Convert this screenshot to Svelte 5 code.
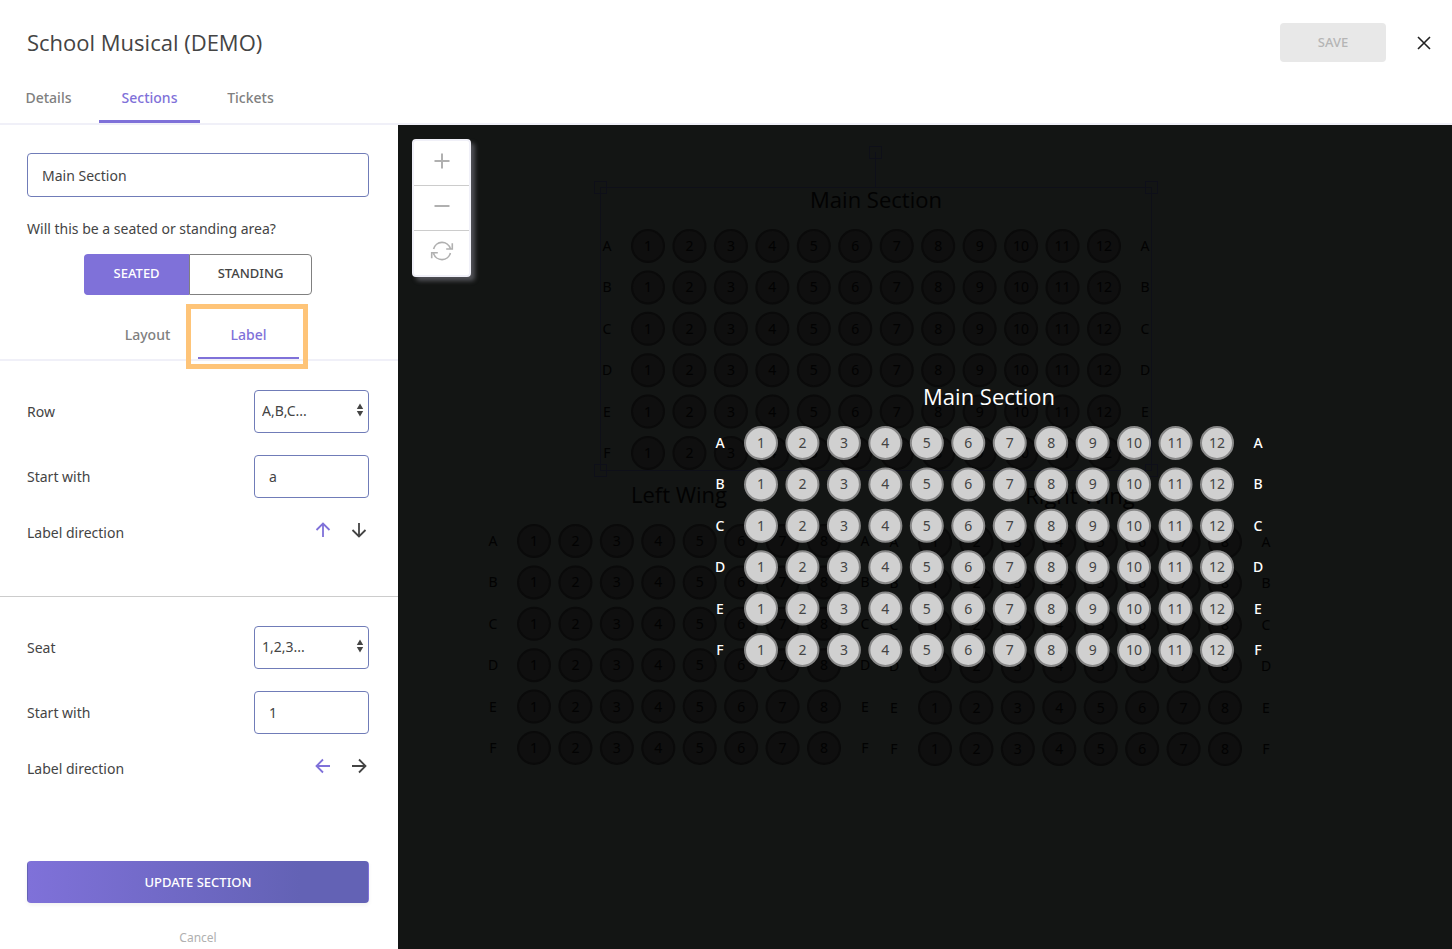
<script>
  const rowNames = ['A', 'B', 'C', 'D', 'E', 'F'];
  const rowSpan = 207;

  const ghosts = [
    { name: 'Main Section', x: 250, y: 121, seats: 12, span: 456 },
    { name: 'Left Wing', x: 136, y: 416, seats: 8, span: 290 },
    { name: 'Right Wing', x: 537, y: 417, seats: 8, span: 290 }
  ];
  const active = { name: 'Main Section', x: 363, y: 318, seats: 12, span: 456 };
  const handles = [[202, 62], [753, 62], [202, 345], [753, 345], [477, 27]];

  let tab = $state('Sections');
  let area = $state('Seated');
  let subTab = $state('Label');
  let sectionName = $state('Main Section');
  let rowStart = $state('a');
  let seatStart = $state('1');
  let rowDirection = $state('up');
  let seatDirection = $state('left');

  const arrows = {
    up: 'M10 17V3.5M3.5 10L10 3.5L16.5 10',
    down: 'M10 3V16.5M3.5 10L10 16.5L16.5 10',
    left: 'M17 10H3.5M10 3.5L3.5 10L10 16.5',
    right: 'M3 10H16.5M10 3.5L16.5 10L10 16.5'
  };
</script>

{#snippet block(section, kind)}
  <g class={kind} transform="translate({section.x} {section.y})">
    <text class="name" x={section.span / 2} y="-38">{section.name}</text>
    {#each rowNames as row, r}
      {@const y = (r * rowSpan) / (rowNames.length - 1)}
      <text class="row-name" x="-41" y={y + 5}>{row}</text>
      {#each Array(section.seats) as _, s}
        {@const x = (s * section.span) / (section.seats - 1)}
        <circle cx={x} cy={y} r="16" />
        <text class="seat" {x} y={y + 5}>{s + 1}</text>
      {/each}
      <text class="row-name" x={section.span + 41} y={y + 5}>{row}</text>
    {/each}
  </g>
{/snippet}

{#snippet direction(label, options, current, pick)}
  <div class="field direction" role="group" aria-label={label}>
    <span>{label}</span>
    <div class="arrows">
      {#each options as option}
        <button type="button" class:on={current === option} aria-label={option} onclick={() => pick(option)}>
          <svg width="20" height="20" viewBox="0 0 20 20"><path d={arrows[option]} /></svg>
        </button>
      {/each}
    </div>
  </div>
{/snippet}

{#snippet sorter()}
  <svg class="sorter" width="8" height="14" viewBox="0 0 8 14"><path d="M4 0.5L7.2 6H0.8ZM4 13.5L7.2 8H0.8Z" /></svg>
{/snippet}

<div class="page">
  <header>
    <div class="title-bar">
      <h1>School Musical (DEMO)</h1>
      <button type="button" class="save" disabled>SAVE</button>
      <button type="button" class="close" aria-label="Close">
        <svg width="16" height="16" viewBox="0 0 16 16"><path d="M2 2L14 14M14 2L2 14" /></svg>
      </button>
    </div>
    <nav class="tabs">
      {#each ['Details', 'Sections', 'Tickets'] as name}
        <button type="button" class:selected={tab === name} onclick={() => (tab = name)}>{name}</button>
      {/each}
    </nav>
  </header>

  <div class="body">
    <aside>
      <div class="intro">
        <input class="section-name" type="text" aria-label="Section name" bind:value={sectionName} />
        <p>Will this be a seated or standing area?</p>
        <div class="toggle">
          <button type="button" class:on={area === 'Seated'} onclick={() => (area = 'Seated')}>SEATED</button>
          <button type="button" class:on={area === 'Standing'} onclick={() => (area = 'Standing')}>STANDING</button>
        </div>
      </div>

      <nav class="sub-tabs">
        {#each ['Layout', 'Label'] as name}
          <button type="button" class:selected={subTab === name} onclick={() => (subTab = name)}>{name}</button>
        {/each}
      </nav>

      <section>
        <div class="field">
          <label for="row-style">Row</label>
          <div class="select">
            <select id="row-style"><option>A,B,C...</option><option>1,2,3...</option></select>
            {@render sorter()}
          </div>
        </div>
        <div class="field">
          <label for="row-start">Start with</label>
          <input id="row-start" type="text" bind:value={rowStart} />
        </div>
        {@render direction('Label direction', ['up', 'down'], rowDirection, (d) => (rowDirection = d))}
      </section>

      <section>
        <div class="field">
          <label for="seat-style">Seat</label>
          <div class="select">
            <select id="seat-style"><option>1,2,3...</option><option>A,B,C...</option></select>
            {@render sorter()}
          </div>
        </div>
        <div class="field">
          <label for="seat-start">Start with</label>
          <input id="seat-start" type="text" bind:value={seatStart} />
        </div>
        {@render direction('Label direction', ['left', 'right'], seatDirection, (d) => (seatDirection = d))}
      </section>

      <div class="actions">
        <button type="button" class="update">UPDATE SECTION</button>
        <button type="button" class="cancel">Cancel</button>
      </div>
    </aside>

    <main>
      <svg class="plan">
        {#each ghosts as ghost}
          {@render block(ghost, 'ghost')}
        {/each}
        <g class="selection">
          <rect x="202" y="62" width="551" height="283" />
          <path d="M477 27V62" />
          {#each handles as [x, y]}
            <rect x={x - 6} y={y - 6} width="12" height="12" />
          {/each}
        </g>
        {@render block(active, 'active')}
      </svg>
      <div class="zoom">
        <button type="button" aria-label="Zoom in">
          <svg width="24" height="24" viewBox="0 0 24 24"><path d="M12 4.500V19.500M4.500 12H19.500" /></svg>
        </button>
        <button type="button" aria-label="Zoom out">
          <svg width="24" height="24" viewBox="0 0 24 24"><path d="M4.500 12H19.500" /></svg>
        </button>
        <button type="button" aria-label="Reset view">
          <svg class="reset" width="24" height="24" viewBox="0 0 24 24">
            <path d="M3.600 10A8.700 8.700 0 0 1 20.400 9.600M22.300 4.300V10H16.200M20.400 14A8.700 8.700 0 0 1 3.600 14.400M1.700 19.200V13.700H7.800" />
          </svg>
        </button>
      </div>
    </main>
  </div>
</div>

<style>
  :global(body) {
    margin: 0;
  }
  .page {
    display: flex;
    flex-direction: column;
    min-height: 100vh;
    font-family: 'Noto Sans', sans-serif;
    font-size: 14px;
    line-height: 20px;
    color: #444;
    background: #fff;
  }
  * {
    box-sizing: border-box;
  }
  button,
  input,
  select {
    font: inherit;
    color: inherit;
    margin: 0;
  }
  button {
    padding: 0;
    border: 0;
    background: none;
    cursor: pointer;
  }
  svg {
    display: block;
    fill: none;
    stroke: currentColor;
  }
  header {
    border-bottom: 2px solid #f0f0f8;
  }
  .title-bar {
    display: flex;
    align-items: center;
    padding: 23px 20px 0 27px;
  }
  h1 {
    flex: 1;
    margin: 0;
    padding-bottom: 2px;
    font-family: 'Open Sans', sans-serif;
    font-size: 22px;
    line-height: 36px;
    font-weight: 400;
  }
  .save {
    width: 106px;
    height: 39px;
    margin-right: 30px;
    padding-bottom: 2px;
    border-radius: 4px;
    background: #e8e8e8;
    color: #b5b5b5;
    font-size: 13px;
    font-weight: 500;
  }
  .close svg {
    color: #222;
    stroke-width: 1.6;
  }
  .tabs,
  .sub-tabs {
    display: flex;
    font-weight: 500;
    color: #808080;
  }
  .tabs {
    margin: 11px 0 0 -2px;
  }
  .tabs button,
  .sub-tabs button {
    min-width: 101px;
    height: 50px;
    padding-top: 2px;
    border-bottom: 3px solid transparent;
    border-radius: 2px 2px 0 0;
  }
  .tabs .selected,
  .sub-tabs .selected {
    color: #7f71d9;
    border-bottom-color: #7f71d9;
  }
  .body {
    flex: 1;
    display: flex;
  }
  aside {
    flex: none;
    width: 398px;
  }
  .intro {
    padding: 28px 29px 0 27px;
  }
  input,
  select {
    width: 115px;
    height: 43px;
    padding: 0 14px;
    border: 1px solid #707cb8;
    border-radius: 4px;
    background: #fff;
    outline: 0;
  }
  .section-name {
    display: block;
    width: 100%;
    height: 44px;
  }
  p {
    margin: 22px 0 15px;
  }
  .toggle {
    display: flex;
    justify-content: center;
    font-size: 13px;
    font-weight: 500;
  }
  .toggle button {
    height: 41px;
    padding: 0 28px 3px;
    border: 1px solid #808080;
    border-radius: 0 4px 4px 0;
  }
  .toggle button:first-child {
    padding: 0 29px 3px;
    border-right: 0;
    border-radius: 4px 0 0 4px;
  }
  .toggle .on {
    background: #7f71d9;
    border-color: #7f71d9;
    color: #fff;
  }
  .sub-tabs {
    justify-content: center;
    margin-top: 16px;
    padding-right: 2px;
    border-bottom: 2px solid #f0f0f8;
  }
  .sub-tabs button {
    position: relative;
    height: 48px;
    border-bottom-width: 2px;
  }
  .sub-tabs .selected::after {
    content: '';
    position: absolute;
    inset: -7px -9px -12px -12px;
    border: 5px solid #fec478;
  }
  section {
    display: flex;
    flex-direction: column;
    gap: 22px;
    padding: 29px 29px 50px 27px;
  }
  section + section {
    border-top: 1px solid #ccc;
  }
  .field {
    display: flex;
    align-items: center;
    justify-content: space-between;
  }
  .direction {
    height: 26px;
  }
  .arrows {
    display: flex;
    gap: 16px;
    align-self: flex-start;
  }
  .arrows svg {
    stroke-width: 1.8;
  }
  .arrows .on {
    color: #7f71d9;
  }
  .select {
    position: relative;
  }
  select {
    display: block;
    padding: 0 20px 2px 7px;
    appearance: none;
  }
  .sorter {
    position: absolute;
    right: 5px;
    top: 13px;
    fill: #444;
    stroke: none;
    pointer-events: none;
  }
  .actions {
    display: flex;
    flex-direction: column;
    align-items: center;
    gap: 24px;
    padding: 29px 29px 0 27px;
  }
  .update {
    width: 100%;
    height: 42px;
    border: 1px solid transparent;
    border-radius: 4px;
    background-image: linear-gradient(90deg, #7f71d9, #6362b5 80%);
    box-shadow: 0 2px 4px #0000000f;
    color: #fff;
    font-size: 13px;
    font-weight: 500;
  }
  .cancel {
    color: #b0b0b0;
    font-size: 12px;
    line-height: 22px;
  }
  main {
    position: relative;
    flex: 1;
    min-width: 0;
    overflow: hidden;
    background: #131514;
  }
  .plan {
    position: absolute;
    inset: 0;
    width: 100%;
    height: 100%;
  }
  .plan text {
    stroke: none;
    text-anchor: middle;
  }
  .plan .name {
    font-family: 'Open Sans', sans-serif;
    font-size: 22px;
  }
  .plan circle {
    stroke-width: 2;
  }
  .ghost text {
    fill: #020202;
  }
  .ghost circle {
    fill: #0f0f0f;
    stroke: #0a0a0a;
  }
  .active text {
    fill: #fff;
  }
  .active .row-name {
    font-weight: 500;
  }
  .active circle {
    fill: #d0d0d0;
    stroke: #888;
  }
  .active .seat {
    fill: #444;
  }
  .selection {
    stroke: #0e0f18;
    shape-rendering: crispEdges;
  }
  .zoom {
    position: absolute;
    top: 14px;
    left: 14px;
    display: flex;
    flex-direction: column;
    width: 59px;
    border: 2px solid #f0f0f8;
    border-radius: 4px;
    background: #fff;
    color: #b0b0b0;
    box-shadow: 4px 4px 4px #505156;
  }
  .zoom button {
    display: grid;
    place-items: center;
    height: 44px;
    padding-bottom: 4px;
  }
  .zoom button + button {
    height: 45px;
    border-top: 1px solid #ccc;
  }
  .zoom svg {
    stroke-width: 2;
  }
  .zoom .reset {
    stroke-width: 1.6;
  }
</style>
